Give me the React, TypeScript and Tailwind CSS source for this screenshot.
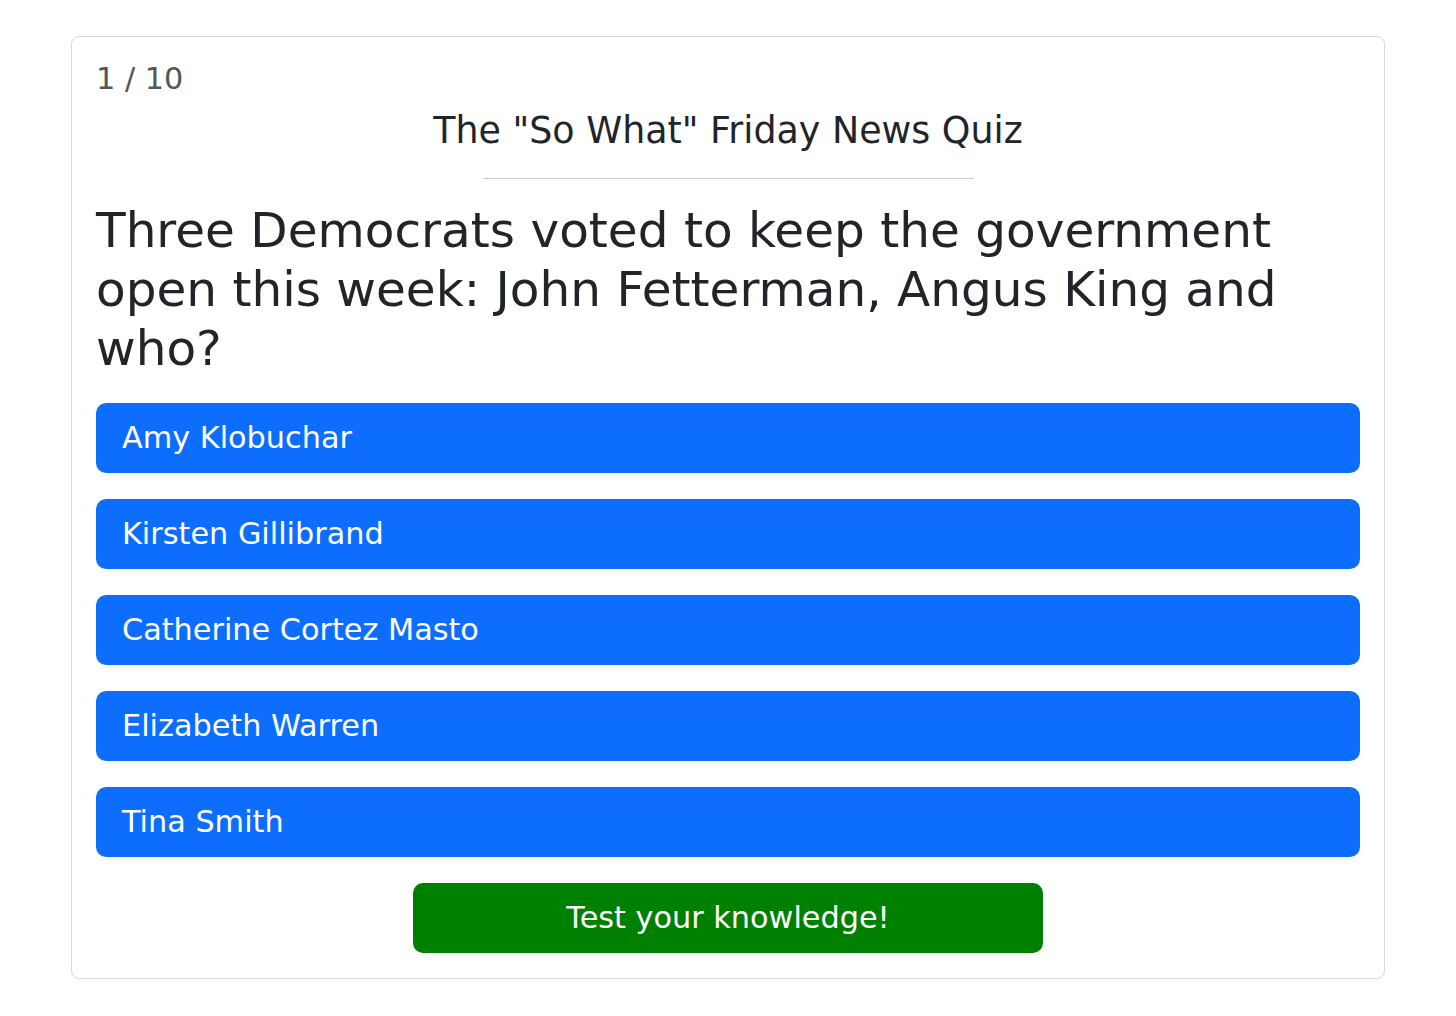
import React, { useState } from 'react';

const OPTIONS = [
  'Amy Klobuchar',
  'Kirsten Gillibrand',
  'Catherine Cortez Masto',
  'Elizabeth Warren',
  'Tina Smith',
];

const App: React.FC = () => {
  const [selected, setSelected] = useState<number | null>(null);

  return (
    <div className="min-h-screen bg-white pt-[36px] pl-[71px] font-['DejaVu_Sans',sans-serif]">
      <div className="w-[1314px] rounded-[8px] border border-[#d9d9d9] px-[24px] pt-[19px] pb-[25px]">
        {/* question counter */}
        <div className="text-[30.3px] leading-[45px] text-[#555555]">1 / 10</div>

        <h2 className="mt-[8px] text-center text-[36.4px] leading-[43px] text-[#212529]">
          The "So What" Friday News Quiz
        </h2>
        <hr className="mx-auto mt-[26px] w-[491px] border-0 border-t border-[#cccccc]" />

        <p className="mt-[22px] text-[48.5px] leading-[59px] text-[#212529]">
          Three Democrats voted to keep the government open this week: John Fetterman, Angus King and
          who?
        </p>

        <div className="mt-[25px] flex flex-col gap-[26px]">
          {OPTIONS.map((opt, i) => (
            <button
              key={opt}
              type="button"
              onClick={() => setSelected(i)}
              className={
                'flex h-[70px] w-full items-center rounded-[10px] px-[26px] text-left text-[30.3px] text-white ' +
                (selected === i ? 'bg-[#0b5ed7]' : 'bg-[#0d6efd]')
              }
            >
              {opt}
            </button>
          ))}
        </div>

        <div className="mt-[26px] flex justify-center">
          <button
            type="button"
            className="h-[70px] w-[630px] rounded-[10px] bg-[#008000] text-[30.3px] text-white"
          >
            Test your knowledge!
          </button>
        </div>
      </div>
    </div>
  );
};

export default App;
